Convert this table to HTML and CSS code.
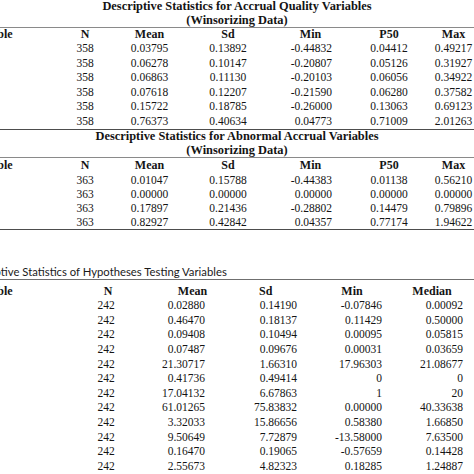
FILE: index.html
```html
<!DOCTYPE html>
<html>
<head>
<meta charset="utf-8">
<link rel="stylesheet" href="styles.css">
</head>
<body>
<div class="page">
  <section class="tbl t1">
    <div class="cap first">Descriptive Statistics for Accrual Quality Variables</div>
    <div class="cap">(Winsorizing Data)</div>
    <div class="row g7 head rule"><div class="lbl">Variable</div><div>N</div><div>Mean</div><div>Sd</div><div>Min</div><div>P50</div><div>Max</div></div>
    <div class="row g7 data"><div></div><div>358</div><div>0.03795</div><div>0.13892</div><div>-0.44832</div><div>0.04412</div><div>0.49217</div></div>
    <div class="row g7 data"><div></div><div>358</div><div>0.06278</div><div>0.10147</div><div>-0.20807</div><div>0.05126</div><div>0.31927</div></div>
    <div class="row g7 data"><div></div><div>358</div><div>0.06863</div><div>0.11130</div><div>-0.20103</div><div>0.06056</div><div>0.34922</div></div>
    <div class="row g7 data"><div></div><div>358</div><div>0.07618</div><div>0.12207</div><div>-0.21590</div><div>0.06280</div><div>0.37582</div></div>
    <div class="row g7 data"><div></div><div>358</div><div>0.15722</div><div>0.18785</div><div>-0.26000</div><div>0.13063</div><div>0.69123</div></div>
    <div class="row g7 data"><div></div><div>358</div><div>0.76373</div><div>0.40634</div><div>0.04773</div><div>0.71009</div><div>2.01263</div></div>
  </section>

  <section class="tbl t2">
    <div class="cap first">Descriptive Statistics for Abnormal Accrual Variables</div>
    <div class="cap">(Winsorizing Data)</div>
    <div class="row g7 head rule"><div class="lbl">Variable</div><div>N</div><div>Mean</div><div>Sd</div><div>Min</div><div>P50</div><div>Max</div></div>
    <div class="row g7 data"><div></div><div>363</div><div>0.01047</div><div>0.15788</div><div>-0.44383</div><div>0.01138</div><div>0.56210</div></div>
    <div class="row g7 data"><div></div><div>363</div><div>0.00000</div><div>0.00000</div><div>0.00000</div><div>0.00000</div><div>0.00000</div></div>
    <div class="row g7 data"><div></div><div>363</div><div>0.17897</div><div>0.21436</div><div>-0.28802</div><div>0.14479</div><div>0.79896</div></div>
    <div class="row g7 data"><div></div><div>363</div><div>0.82927</div><div>0.42842</div><div>0.04357</div><div>0.77174</div><div>1.94622</div></div>
  </section>

  <section class="tbl t3">
    <div class="sanscap">Descriptive Statistics of Hypotheses Testing Variables</div>
    <div class="row g6 head rule"><div class="lbl">Variable</div><div>N</div><div>Mean</div><div>Sd</div><div>Min</div><div>Median</div></div>
    <div class="row g6 data"><div></div><div>242</div><div>0.02880</div><div>0.14190</div><div>-0.07846</div><div>0.00092</div></div>
    <div class="row g6 data"><div></div><div>242</div><div>0.46470</div><div>0.18137</div><div>0.11429</div><div>0.50000</div></div>
    <div class="row g6 data"><div></div><div>242</div><div>0.09408</div><div>0.10494</div><div>0.00095</div><div>0.05815</div></div>
    <div class="row g6 data"><div></div><div>242</div><div>0.07487</div><div>0.09676</div><div>0.00031</div><div>0.03659</div></div>
    <div class="row g6 data"><div></div><div>242</div><div>21.30717</div><div>1.66310</div><div>17.96303</div><div>21.08677</div></div>
    <div class="row g6 data"><div></div><div>242</div><div>0.41736</div><div>0.49414</div><div>0</div><div>0</div></div>
    <div class="row g6 data"><div></div><div>242</div><div>17.04132</div><div>6.67863</div><div>1</div><div>20</div></div>
    <div class="row g6 data"><div></div><div>242</div><div>61.01265</div><div>75.83832</div><div>0.00000</div><div>40.33638</div></div>
    <div class="row g6 data"><div></div><div>242</div><div>3.32033</div><div>15.86656</div><div>0.58380</div><div>1.66850</div></div>
    <div class="row g6 data"><div></div><div>242</div><div>9.50649</div><div>7.72879</div><div>-13.58000</div><div>7.63500</div></div>
    <div class="row g6 data"><div></div><div>242</div><div>0.16470</div><div>0.19065</div><div>-0.57659</div><div>0.14428</div></div>
    <div class="row g6 data"><div></div><div>242</div><div>2.55673</div><div>4.82323</div><div>0.18285</div><div>1.24887</div></div>
  </section>
</div>
</body>
</html>
```

FILE: styles.css
```css
html, body {
  margin: 0;
  padding: 0;
  background: #ffffff;
}

body {
  width: 474px;
  height: 474px;
  overflow: hidden;
  font-family: "Liberation Serif", "Times New Roman", serif;
  color: #141414;
}

.page {
  width: 474px;
}

.cap {
  text-align: center;
  font-weight: bold;
  font-size: 12.4px;
  line-height: 14px;
  white-space: nowrap;
}

.cap.first {
  margin-top: -1px;
}

.row {
  display: grid;
  white-space: nowrap;
}

.head {
  font-weight: bold;
  font-size: 12px;
}

.data {
  font-size: 11.5px;
}

.lbl {
  text-indent: -31px;
}

/* seven-column tables */
.g7 {
  grid-template-columns: 60px 50px 79px 78px 87px 70px 59px;
}

.g7 > :nth-child(n+2) {
  text-align: center;
}

.g7.data > :nth-child(5) {
  text-align: right;
  padding-right: 22px;
}

.t1 .head {
  height: 13px;
  line-height: 13px;
}

.t1 .data {
  height: 14.6px;
  line-height: 14.6px;
}

.rule {
  border-top: 1px solid #8a8a8a;
}

.t2 {
  border-top: 1.5px solid #4d4d4d;
  border-bottom: 1.5px solid #4d4d4d;
}

.t2 .head {
  height: 15px;
  line-height: 15px;
}

.t2 .data {
  height: 14.2px;
  line-height: 14.2px;
}

/* hypotheses table */
.t3 {
  margin-top: 34.7px;
}

.sanscap {
  font-family: Lato, "Noto Sans", sans-serif;
  font-size: 11.3px;
  line-height: 14px;
  white-space: nowrap;
  text-indent: -37px;
  color: #1a1a1a;
}

.t3 .rule {
  border-top: 1px solid #6f6f6f;
}

.g6 {
  grid-template-columns: 62px 88px 85px 75px 84px 76px;
}

.g6.head {
  height: 19px;
  padding-top: 4px;
  line-height: 14px;
  box-sizing: border-box;
}

.g6.head > :nth-child(2) {
  text-align: center;
  padding-left: 4px;
}

.g6.head > :nth-child(3),
.g6.head > :nth-child(5),
.g6.head > :nth-child(6) {
  text-align: center;
}

.g6.head > :nth-child(4) {
  text-align: left;
  padding-left: 24px;
}

.g6.data {
  height: 14.64px;
  line-height: 14.64px;
}

.g6.data > :nth-child(2) {
  text-align: center;
}

.g6.data > :nth-child(3) {
  text-align: right;
  padding-right: 30px;
}

.g6.data > :nth-child(4) {
  text-align: right;
  padding-right: 13px;
}

.g6.data > :nth-child(5) {
  text-align: right;
  padding-right: 12px;
}

.g6.data > :nth-child(6) {
  text-align: right;
  padding-right: 7px;
}
```
